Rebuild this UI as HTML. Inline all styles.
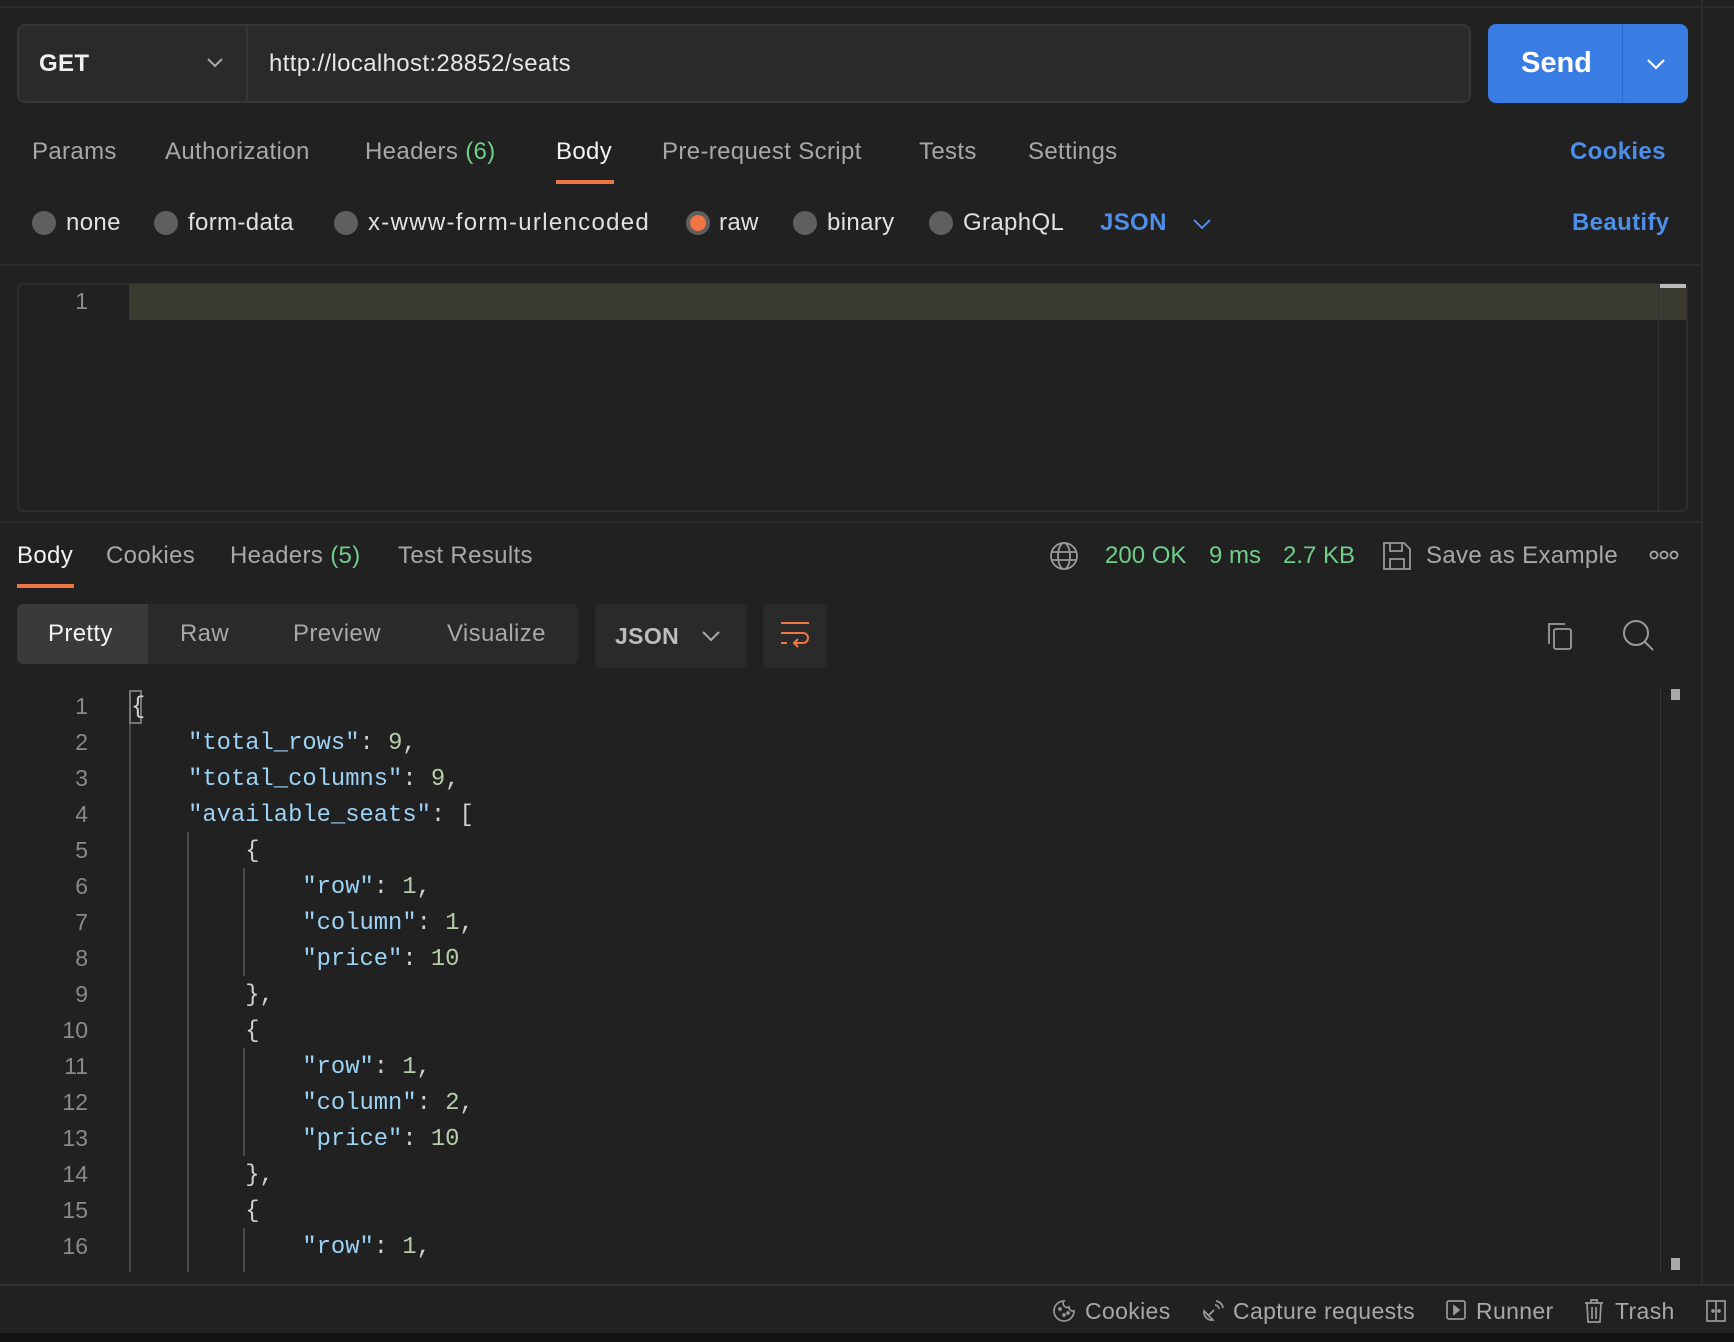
<!DOCTYPE html>
<html><head><meta charset="utf-8"><style>
*{margin:0;padding:0;box-sizing:border-box}
body{width:1734px;height:1342px;background:#212121;font-family:"Liberation Sans",sans-serif;color:#a8a8a8;position:relative;overflow:hidden}
.a{position:absolute;white-space:nowrap}
.t{font-size:24px;line-height:28px;letter-spacing:0.35px}
.code{font-family:"Liberation Mono",monospace;font-size:23.8px;line-height:36px;white-space:pre}
.k{color:#9cd3f5}.n{color:#b5cea8}.p{color:#d0d0d0}
.ln{position:absolute;left:40px;width:48px;text-align:right;color:#8a8a8a;font-family:"Liberation Sans",sans-serif;font-size:23px}
.rad{position:absolute;width:24px;height:24px;border-radius:50%;background:#5f5f5f;top:211px}
</style></head><body>
<div class="a" style="left:0;top:6px;width:1734px;height:2px;background:#2c2c2c"></div>
<div class="a" style="left:1701px;top:0;width:2px;height:1285px;background:#2c2c2c"></div>
<div class="a" style="left:17px;top:24px;width:1454px;height:79px;border:2px solid #363636;border-radius:8px;background:#2a2a2a"></div>
<div class="a" style="left:246px;top:26px;width:2px;height:75px;background:#363636"></div>
<div class="a t" style="left:39px;top:50px;color:#f0f0f0;font-weight:bold">GET</div>
<svg class="a" style="left:206px;top:57px" width="18" height="12"><path d="M2 2l7 7 7-7" stroke="#aaa" stroke-width="2" fill="none"/></svg>
<div class="a t" style="left:269px;top:50px;color:#e6e6e6">http://localhost:28852/seats</div>
<div class="a" style="left:1488px;top:24px;width:200px;height:79px;background:#387ce4;border-radius:8px"></div>
<div class="a" style="left:1622px;top:24px;width:1px;height:79px;background:#2f6cc8"></div>
<div class="a" style="left:1521px;top:47px;color:#fff;font-weight:bold;font-size:29px">Send</div>
<svg class="a" style="left:1646px;top:58px" width="20" height="12"><path d="M2 2l8 8 8-8" stroke="#fff" stroke-width="2.2" fill="none"/></svg>
<div class="a t" style="left:32px;top:138px">Params</div>
<div class="a t" style="left:165px;top:138px">Authorization</div>
<div class="a t" style="left:365px;top:138px">Headers <span style="color:#6fcf8a">(6)</span></div>
<div class="a t" style="left:556px;top:138px;color:#f2f2f2">Body</div>
<div class="a" style="left:556px;top:180px;width:58px;height:4px;background:#ef7543"></div>
<div class="a t" style="left:662px;top:138px">Pre-request Script</div>
<div class="a t" style="left:919px;top:138px">Tests</div>
<div class="a t" style="left:1028px;top:138px">Settings</div>
<div class="a t" style="left:1570px;top:138px;color:#4d8ee8;font-weight:bold">Cookies</div>
<div class="rad" style="left:32px"></div><div class="a t" style="left:66px;top:209px;color:#e0e0e0">none</div>
<div class="rad" style="left:154px"></div><div class="a t" style="left:188px;top:209px;color:#e0e0e0">form-data</div>
<div class="rad" style="left:334px"></div><div class="a t" style="left:368px;top:209px;color:#e0e0e0;letter-spacing:1.3px">x-www-form-urlencoded</div>
<div class="rad" style="left:686px;background:#ef7543;border:4px solid #5f5f5f"></div><div class="a t" style="left:719px;top:209px;color:#e0e0e0">raw</div>
<div class="rad" style="left:793px"></div><div class="a t" style="left:827px;top:209px;color:#e0e0e0">binary</div>
<div class="rad" style="left:929px"></div><div class="a t" style="left:963px;top:209px;color:#e0e0e0">GraphQL</div>
<div class="a t" style="left:1100px;top:209px;color:#4d8ee8;font-weight:bold">JSON</div>
<svg class="a" style="left:1192px;top:218px" width="20" height="12"><path d="M2 2l8 8 8-8" stroke="#4d8ee8" stroke-width="2" fill="none"/></svg>
<div class="a t" style="left:1572px;top:209px;color:#4d8ee8;font-weight:bold">Beautify</div>
<div class="a" style="left:0;top:264px;width:1701px;height:2px;background:#2c2c2c"></div>
<div class="a" style="left:17px;top:283px;width:1671px;height:229px;border:2px solid #2e2e2e;border-radius:6px"></div>
<div class="a" style="left:129px;top:284px;width:1529px;height:36px;background:#3c3b31"></div>
<div class="a" style="left:1658px;top:284px;width:28px;height:36px;background:#3c3b31"></div>
<div class="a" style="left:1658px;top:284px;width:1px;height:226px;background:#333"></div>
<div class="a" style="left:1660px;top:284px;width:26px;height:4px;background:#bbb"></div>
<div class="ln" style="top:288px;left:48px;width:40px;color:#8a8a8a">1</div>
<div class="a" style="left:0;top:521px;width:1701px;height:2px;background:#2c2c2c"></div>
<div class="a t" style="left:17px;top:542px;color:#f2f2f2">Body</div>
<div class="a" style="left:17px;top:584px;width:57px;height:4px;background:#ef7543"></div>
<div class="a t" style="left:106px;top:542px">Cookies</div>
<div class="a t" style="left:230px;top:542px">Headers <span style="color:#6fcf8a">(5)</span></div>
<div class="a t" style="left:398px;top:542px">Test Results</div>
<svg class="a" style="left:1049px;top:541px" width="30" height="30" fill="none" stroke="#999" stroke-width="1.8"><circle cx="15" cy="15" r="13"/><ellipse cx="15" cy="15" rx="6" ry="13"/><path d="M3 11h24M3 19h24"/></svg>
<div class="a t" style="left:1105px;top:542px;color:#6fcf8a;letter-spacing:0">200 OK</div>
<div class="a t" style="left:1209px;top:542px;color:#6fcf8a;letter-spacing:0">9 ms</div>
<div class="a t" style="left:1283px;top:542px;color:#6fcf8a;letter-spacing:0">2.7 KB</div>
<svg class="a" style="left:1382px;top:541px" width="30" height="30" fill="none" stroke="#999" stroke-width="1.8"><path d="M2 2h20l6 6v20H2z"/><path d="M8 2v8h12V2M8 28V18h14v10"/></svg>
<div class="a t" style="left:1426px;top:542px">Save as Example</div>
<svg class="a" style="left:1649px;top:550px" width="30" height="10" fill="none" stroke="#aaa" stroke-width="1.8"><circle cx="5" cy="5" r="3.5"/><circle cx="15" cy="5" r="3.5"/><circle cx="25" cy="5" r="3.5"/></svg>
<div class="a" style="left:17px;top:604px;width:561px;height:60px;background:#2a2a2a;border-radius:6px"></div>
<div class="a" style="left:17px;top:604px;width:131px;height:60px;background:#3a3a3a;border-radius:6px 0 0 6px"></div>
<div class="a t" style="left:48px;top:620px;color:#f2f2f2">Pretty</div>
<div class="a t" style="left:180px;top:620px">Raw</div>
<div class="a t" style="left:293px;top:620px">Preview</div>
<div class="a t" style="left:447px;top:620px">Visualize</div>
<div class="a" style="left:595px;top:604px;width:152px;height:64px;background:#2a2a2a;border-radius:6px"></div>
<div class="a t" style="left:615px;top:622px;color:#bdbdbd;font-weight:bold;font-size:23px">JSON</div>
<svg class="a" style="left:701px;top:630px" width="20" height="12"><path d="M2 2l8 8 8-8" stroke="#aaa" stroke-width="2" fill="none"/></svg>
<div class="a" style="left:763px;top:604px;width:64px;height:64px;background:#2a2a2a;border-radius:6px"></div>
<svg class="a" style="left:779px;top:620px" width="32" height="32" fill="none" stroke="#ef7543" stroke-width="2"><path d="M2 3h28M2 13h22a5 5 0 010 10h-8M2 23h6"/><path d="M19 19l-4 4 4 4"/></svg>
<svg class="a" style="left:1545px;top:620px" width="32" height="32" fill="none" stroke="#9a9a9a" stroke-width="1.8"><path d="M4 24V4h16"/><rect x="9" y="9" width="17" height="20" rx="2"/></svg>
<svg class="a" style="left:1622px;top:619px" width="34" height="34" fill="none" stroke="#9a9a9a" stroke-width="2"><circle cx="14" cy="14" r="12"/><path d="M23 23l8 8"/></svg>
<div class="a" style="left:129px;top:724px;width:2px;height:548px;background:#4a4a4a"></div>
<div class="a" style="left:187px;top:832px;width:2px;height:440px;background:#4a4a4a"></div>
<div class="a" style="left:243px;top:868px;width:2px;height:108px;background:#4a4a4a"></div>
<div class="a" style="left:243px;top:1048px;width:2px;height:108px;background:#4a4a4a"></div>
<div class="a" style="left:243px;top:1228px;width:2px;height:44px;background:#4a4a4a"></div>
<div class="a" style="left:129px;top:690px;width:13px;height:34px;border:2px solid #777"></div>
<div class="ln" style="top:688px;line-height:36px">1<br>2<br>3<br>4<br>5<br>6<br>7<br>8<br>9<br>10<br>11<br>12<br>13<br>14<br>15<br>16</div>
<div class="a code p" style="left:131px;top:690px">{
    <span class="k">"total_rows"</span>: <span class="n">9</span>,
    <span class="k">"total_columns"</span>: <span class="n">9</span>,
    <span class="k">"available_seats"</span>: [
        {
            <span class="k">"row"</span>: <span class="n">1</span>,
            <span class="k">"column"</span>: <span class="n">1</span>,
            <span class="k">"price"</span>: <span class="n">10</span>
        },
        {
            <span class="k">"row"</span>: <span class="n">1</span>,
            <span class="k">"column"</span>: <span class="n">2</span>,
            <span class="k">"price"</span>: <span class="n">10</span>
        },
        {
            <span class="k">"row"</span>: <span class="n">1</span>,</div>
<div class="a" style="left:1660px;top:688px;width:1px;height:584px;background:#333"></div>
<div class="a" style="left:1671px;top:689px;width:9px;height:11px;background:#aaa"></div>
<div class="a" style="left:1671px;top:1258px;width:9px;height:12px;background:#aaa"></div>
<div class="a" style="left:0;top:1284px;width:1734px;height:2px;background:#2f2f2f"></div>
<svg class="a" style="left:1052px;top:1299px" width="24" height="24" fill="none" stroke="#999" stroke-width="1.7"><path d="M12 2a10 10 0 1010 10 4 4 0 01-5-4 4 4 0 01-5-6z"/><circle cx="8" cy="10" r="1"/><circle cx="12" cy="16" r="1"/><circle cx="16" cy="14" r="1"/></svg>
<div class="a t" style="left:1085px;top:1297px;font-size:23px">Cookies</div>
<svg class="a" style="left:1201px;top:1299px" width="24" height="24" fill="none" stroke="#999" stroke-width="1.7"><path d="M3 12a8 8 0 009 9L3 12zM8 16l5-5M14 6a4 4 0 014 4M15 2a8 8 0 017 7"/></svg>
<div class="a t" style="left:1233px;top:1297px;font-size:23px">Capture requests</div>
<svg class="a" style="left:1445px;top:1299px" width="22" height="22" fill="none" stroke="#999" stroke-width="1.7"><rect x="2" y="2" width="18" height="18" rx="2"/><path d="M9 7l5 4-5 4z" fill="#999"/></svg>
<div class="a t" style="left:1476px;top:1297px;font-size:23px">Runner</div>
<svg class="a" style="left:1584px;top:1298px" width="20" height="26" fill="none" stroke="#999" stroke-width="1.7"><path d="M1 5h18M7 5V2h6v3M3 5l1 19h12l1-19M8 9v12M12 9v12"/></svg>
<div class="a t" style="left:1615px;top:1297px;font-size:23px">Trash</div>
<svg class="a" style="left:1705px;top:1299px" width="22" height="24" fill="none" stroke="#999" stroke-width="1.7"><rect x="2" y="2" width="18" height="20"/><path d="M11 2v20"/><circle cx="8" cy="12" r="1" fill="#999"/><circle cx="14" cy="12" r="1" fill="#999"/></svg>
<div class="a" style="left:0;top:1333px;width:1734px;height:9px;background:#121212"></div>
</body></html>
